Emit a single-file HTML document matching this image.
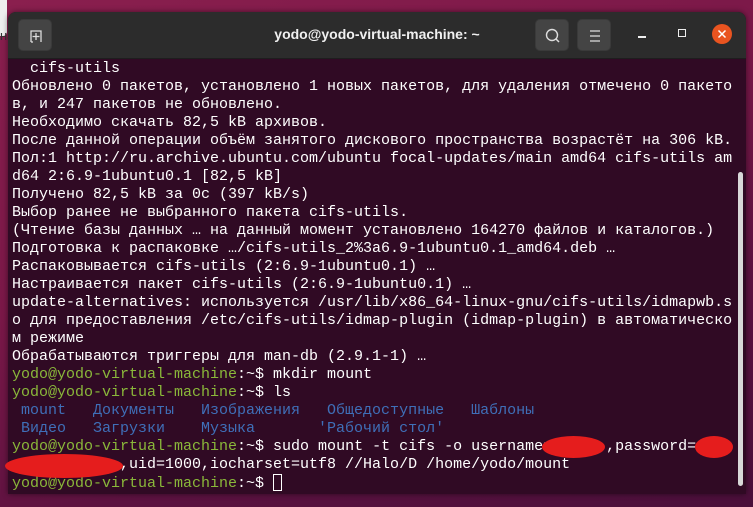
<!DOCTYPE html>
<html><head><meta charset="utf-8"><style>
*{margin:0;padding:0;box-sizing:border-box}
body{width:753px;height:507px;overflow:hidden;position:relative;background:linear-gradient(160deg,#8a1f4e 0%,#7a1848 40%,#5c1240 70%,#4a0f3a 100%);font-family:"Liberation Mono",monospace}
.win{position:absolute;left:8px;top:12px;width:738px;height:482px;background:#300a24;border-radius:8px 8px 0 0;overflow:hidden;box-shadow:0 0 6px rgba(0,0,0,.5)}
.hdr{position:absolute;left:0;top:0;width:100%;height:47px;background:#2c2c2c;border-bottom:1px solid #1e1e1e}
.btn{position:absolute;top:7px;width:34px;height:32px;background:#444;border-radius:5px;border:1px solid #3a3a3a}
.title{position:absolute;left:0;width:100%;top:14px;text-align:center;color:#f0f0f0;font:bold 14px "Liberation Sans",sans-serif}
.term{position:absolute;left:4px;top:48px;color:#fff;font-size:15px;line-height:18px;white-space:pre;letter-spacing:0}
.g{color:#8ab83a}.b{color:#3f6fb8}
.sb{position:absolute;left:730px;top:160px;width:5px;height:314px;background:#d8d8d8;border-radius:3px}
.red{position:absolute;background:#e51d1d;border-radius:50%}
</style></head><body>
<div style="position:absolute;left:0;top:0;width:7px;height:36px;background:#eee;border-radius:0 0 4px 0"></div>
<div style="position:absolute;left:0;top:28px;color:#333;font:13px 'Liberation Sans',sans-serif">на</div>
<div class="win">
<div class="hdr">
<div class="btn" style="left:10px"><svg width="34" height="32" viewBox="0 0 34 32"><path d="M12 22V11h10v11M14 22h-2M17 13v7M13.5 16.5h7" fill="none" stroke="#ddd" stroke-width="1.3"/></svg></div>
<div class="title">yodo@yodo-virtual-machine: ~</div>
<div class="btn" style="left:527px"><svg width="34" height="32" viewBox="0 0 34 32"><circle cx="16" cy="15" r="5.5" fill="none" stroke="#ddd" stroke-width="1.4"/><path d="M20 19l3 3" stroke="#ddd" stroke-width="1.5"/></svg></div>
<div class="btn" style="left:569px"><svg width="34" height="32" viewBox="0 0 34 32"><path d="M12 11h10M12 16h10M12 21h10" stroke="#ddd" stroke-width="1.3"/></svg></div>
<div style="position:absolute;left:630px;top:24px;width:8px;height:1.5px;background:#eee"></div>
<div style="position:absolute;left:670px;top:17px;width:8px;height:8px;border:1.5px solid #eee"></div>
<div style="position:absolute;left:704px;top:12px;width:20px;height:20px;border-radius:50%;background:#e95420"><svg width="20" height="20"><path d="M6.5 6.5l7 7M13.5 6.5l-7 7" stroke="#fff" stroke-width="1.5"/></svg></div>
</div>
<div class="term">  cifs-utils
Обновлено 0 пакетов, установлено 1 новых пакетов, для удаления отмечено 0 пакето
в, и 247 пакетов не обновлено.
Необходимо скачать 82,5 kB архивов.
После данной операции объём занятого дискового пространства возрастёт на 306 kB.
Пол:1 http://ru.archive.ubuntu.com/ubuntu focal-updates/main amd64 cifs-utils am
d64 2:6.9-1ubuntu0.1 [82,5 kB]
Получено 82,5 kB за 0с (397 kB/s)
Выбор ранее не выбранного пакета cifs-utils.
(Чтение базы данных … на данный момент установлено 164270 файлов и каталогов.)
Подготовка к распаковке …/cifs-utils_2%3a6.9-1ubuntu0.1_amd64.deb …
Распаковывается cifs-utils (2:6.9-1ubuntu0.1) …
Настраивается пакет cifs-utils (2:6.9-1ubuntu0.1) …
update-alternatives: используется /usr/lib/x86_64-linux-gnu/cifs-utils/idmapwb.s
о для предоставления /etc/cifs-utils/idmap-plugin (idmap-plugin) в автоматическо
м режиме
Обрабатываются триггеры для man-db (2.9.1-1) …
<span class="g">yodo@yodo-virtual-machine</span>:~$ mkdir mount
<span class="g">yodo@yodo-virtual-machine</span>:~$ ls
<span class="b"> mount   Документы   Изображения   Общедоступные   Шаблоны</span>
<span class="b"> Видео   Загрузки    Музыка       'Рабочий стол'</span>
<span class="g">yodo@yodo-virtual-machine</span>:~$ sudo mount -t cifs -o username=      ,password=
            ,uid=1000,iocharset=utf8 //Halo/D /home/yodo/mount
<span class="g">yodo@yodo-virtual-machine</span>:~$ <span style="display:inline-block;width:9px;height:17px;border:1px solid #fff;vertical-align:-4px"></span></div>
<div class="sb"></div>
</div>
<div class="red" style="left:542px;top:436px;width:63px;height:22px"></div>
<div class="red" style="left:695px;top:436px;width:38px;height:22px"></div>
<div class="red" style="left:5px;top:454px;width:118px;height:24px"></div>
</body></html>
